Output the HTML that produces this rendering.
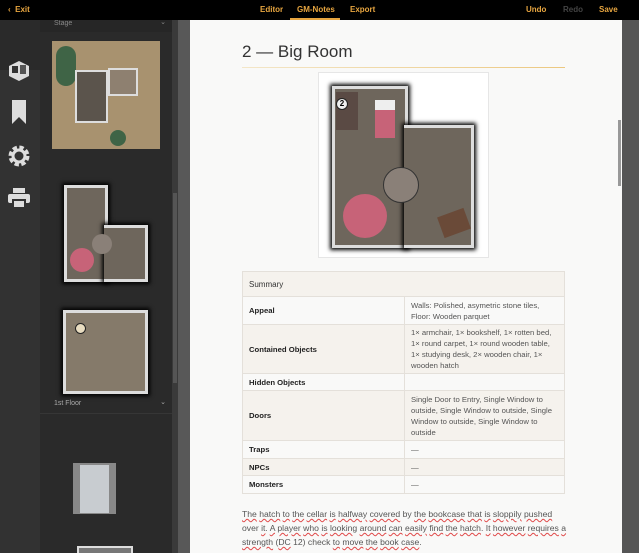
<!DOCTYPE html>
<html style="width:639px;height:553px;overflow:hidden"><head><meta charset="utf-8"><style>
*{margin:0;padding:0;box-sizing:border-box}
body{width:639px;height:553px;overflow:hidden;background:#2b2b2b;font-family:"Liberation Sans",sans-serif;position:relative}
.top{position:absolute;left:0;top:0;width:639px;height:20px;background:#000;color:#e8a640;font-size:8px;font-weight:bold}
.top span{position:absolute;top:5px}
.rail{position:absolute;left:0;top:20px;width:40px;height:533px;background:#323232}
.side{position:absolute;left:40px;top:20px;width:132px;height:533px;background:#2a2a2a;overflow:hidden}
.sb{position:absolute;left:172px;top:20px;width:6px;height:533px;background:#3a3a3a}
.gut{position:absolute;left:178px;top:20px;width:12px;height:533px;background:#585858}
.doc{position:absolute;left:190px;top:20px;width:432px;height:533px;background:#f9f9f8;overflow:hidden}
.rg{position:absolute;left:622px;top:20px;width:17px;height:533px;background:#555}
table{position:absolute;left:242px;top:271px;width:323px;border-collapse:collapse;font-size:7.7px;color:#555}
td{border:1px solid #e4e0da;padding:1px 6px;vertical-align:middle;line-height:11px}
td.k{font-weight:bold;color:#222;width:162px}
tr.b td{background:#f5f2ed}
p.t{position:absolute;left:242px;top:507px;width:325px;font-size:8.6px;line-height:14px;color:#555}
p.t u{text-decoration:underline wavy #e04848;text-decoration-thickness:1px}
.wall{position:absolute;border:3px solid #ddd;box-shadow:0 0 4px 2px #000;background:#6e665c}
</style></head><body>
<div class="top">
<span style="left:8px">‹&nbsp; Exit</span>
<span style="left:260px">Editor</span>
<span style="left:297px">GM-Notes</span>
<span style="left:350px">Export</span>
<span style="left:526px">Undo</span>
<span style="left:563px;color:#444">Redo</span>
<span style="left:599px">Save</span>
<div style="position:absolute;left:290px;top:18px;width:50px;height:2px;background:#e8a640"></div>
</div>
<div class="rail">
<div style="position:absolute;left:0;top:0;width:40px;height:50px;background:#2a2a2a"></div>
<svg style="position:absolute;left:8px;top:40px" width="22" height="22" viewBox="0 0 22 22"><path d="M11 1 L21 6 V16 L11 21 L1 16 V6Z" fill="#ddd"/><rect x="4" y="6" width="6" height="7" fill="#333"/><rect x="12" y="5" width="6" height="9" fill="#555"/></svg>
<svg style="position:absolute;left:12px;top:80px" width="14" height="24"><path d="M0 0H14V24L7 17L0 24Z" fill="#ddd"/></svg>
<svg style="position:absolute;left:8px;top:125px" width="22" height="22" viewBox="0 0 22 22"><circle cx="11" cy="11" r="8" fill="none" stroke="#ddd" stroke-width="5" stroke-dasharray="4 2.3"/><circle cx="11" cy="11" r="6" fill="none" stroke="#ddd" stroke-width="3"/></svg>
<svg style="position:absolute;left:8px;top:168px" width="22" height="20"><rect x="5" y="0" width="12" height="5" fill="#ddd"/><rect x="0" y="6" width="22" height="9" rx="2" fill="#ddd"/><rect x="5" y="12" width="12" height="8" fill="#ddd" stroke="#323232" stroke-width="2"/></svg>
</div>
<div class="side">
<div style="position:absolute;left:0;top:0;width:132px;height:12px;background:#262626;color:#888;font-size:7px;padding:0 0 0 14px">Stage<span style="position:absolute;right:6px;top:-2px">⌄</span></div>
<div style="position:absolute;left:12px;top:21px;width:108px;height:108px;background:#a8926f"></div>
<div style="position:absolute;left:16px;top:26px;width:20px;height:40px;background:#3f6446;border-radius:10px"></div>
<div style="position:absolute;left:35px;top:50px;width:33px;height:53px;background:#5b544c;border:2px solid #ddd"></div>
<div style="position:absolute;left:68px;top:48px;width:30px;height:28px;background:#8e8070;border:2px solid #ddd"></div>
<div style="position:absolute;left:70px;top:110px;width:16px;height:16px;background:#3f6446;border-radius:8px"></div>
<div class="wall" style="left:24px;top:165px;width:44px;height:97px"></div>
<div class="wall" style="left:64px;top:205px;width:44px;height:57px;border-left:none"></div>
<div style="position:absolute;left:30px;top:228px;width:24px;height:24px;border-radius:12px;background:#c76378"></div>
<div style="position:absolute;left:52px;top:214px;width:20px;height:20px;border-radius:10px;background:#8a8078"></div>
<div class="wall" style="left:23px;top:290px;width:85px;height:84px;background:#857a6a"></div>
<div style="position:absolute;left:35px;top:303px;width:11px;height:11px;border-radius:6px;background:#e8dcc0;border:1px solid #222"></div>
<div style="position:absolute;left:0;top:370px;width:132px;height:24px;border-bottom:1px solid #363636;color:#aaa;font-size:7px;padding:10px 0 0 14px">1st Floor<span style="position:absolute;right:6px;top:8px">⌄</span></div>
<div style="position:absolute;left:33px;top:443px;width:43px;height:51px;background:#888"></div>
<div style="position:absolute;left:40px;top:445px;width:29px;height:48px;background:#c8ccd0"></div>
<div style="position:absolute;left:37px;top:526px;width:56px;height:10px;background:#777;border:2px solid #ddd"></div>
</div>
<div class="sb"><div style="position:absolute;left:1px;top:173px;width:4px;height:190px;background:#555"></div></div>
<div class="gut"></div>
<div class="doc">
<div style="position:absolute;left:52px;top:22px;font-size:17px;color:#333">2 — Big Room</div>
<div style="position:absolute;left:52px;top:47px;width:323px;height:1px;background:linear-gradient(90deg,#f3e6c8,#ecc880)"></div>
<div style="position:absolute;left:128px;top:52px;width:171px;height:186px;background:#fff;border:1px solid #e6e6e6"></div>
<div class="wall" style="left:142px;top:66px;width:76px;height:162px"></div>
<div class="wall" style="left:214px;top:105px;width:70px;height:123px;border-left:none"></div>
<div style="position:absolute;left:215px;top:108px;width:6px;height:117px;background:#6e665c"></div>
<div style="position:absolute;left:185px;top:80px;width:20px;height:38px;background:#c76378;border-top:10px solid #eee"></div>
<div style="position:absolute;left:146px;top:72px;width:22px;height:38px;background:#5a4a44"></div>
<div style="position:absolute;left:146px;top:78px;width:12px;height:12px;border-radius:6px;background:#eee;border:1px solid #222;font-size:8px;font-weight:bold;text-align:center;line-height:10px">2</div>
<div style="position:absolute;left:193px;top:147px;width:36px;height:36px;border-radius:18px;background:#8a8078;border:1px solid #333"></div>
<div style="position:absolute;left:153px;top:174px;width:44px;height:44px;border-radius:22px;background:#c76378"></div>
<div style="position:absolute;left:250px;top:192px;width:28px;height:22px;background:#6a4a38;transform:rotate(-20deg)"></div>
</div>
<div class="rg"><div style="position:absolute;left:-4px;top:100px;width:3px;height:66px;background:#999"></div></div>
<table>
<tr class="b"><td colspan="2" style="height:25px;font-size:8px;color:#333">Summary</td></tr>
<tr><td class="k" style="height:28px">Appeal</td><td>Walls: Polished, asymetric stone tiles, Floor: Wooden parquet</td></tr>
<tr class="b"><td class="k" style="height:49px">Contained Objects</td><td>1× armchair, 1× bookshelf, 1× rotten bed, 1× round carpet, 1× round wooden table, 1× studying desk, 2× wooden chair, 1× wooden hatch</td></tr>
<tr><td class="k" style="height:17px">Hidden Objects</td><td></td></tr>
<tr class="b"><td class="k" style="height:50px">Doors</td><td>Single Door to Entry, Single Window to outside, Single Window to outside, Single Window to outside, Single Window to outside</td></tr>
<tr><td class="k" style="height:18px">Traps</td><td>—</td></tr>
<tr class="b"><td class="k" style="height:17px">NPCs</td><td>—</td></tr>
<tr><td class="k" style="height:18px">Monsters</td><td>—</td></tr>
</table>
<p class="t"><u>The</u> <u>hatch</u> <u>to</u> <u>the</u> <u>cellar</u> <u>is</u> <u>halfway</u> <u>covered</u> by <u>the</u> <u>bookcase</u> <u>that</u> <u>is</u> <u>sloppily</u> <u>pushed</u> over <u>it</u>. <u>A</u> <u>player</u> <u>who</u> <u>is</u> <u>looking</u> <u>around</u> <u>can</u> <u>easily</u> <u>find</u> <u>the</u> <u>hatch</u>. <u>It</u> <u>however</u> <u>requires</u> <u>a</u> <u>strength</u> (<u>DC</u> 12) check <u>to</u> <u>move</u> <u>the</u> <u>book</u> <u>case</u>.</p>
</body></html>
